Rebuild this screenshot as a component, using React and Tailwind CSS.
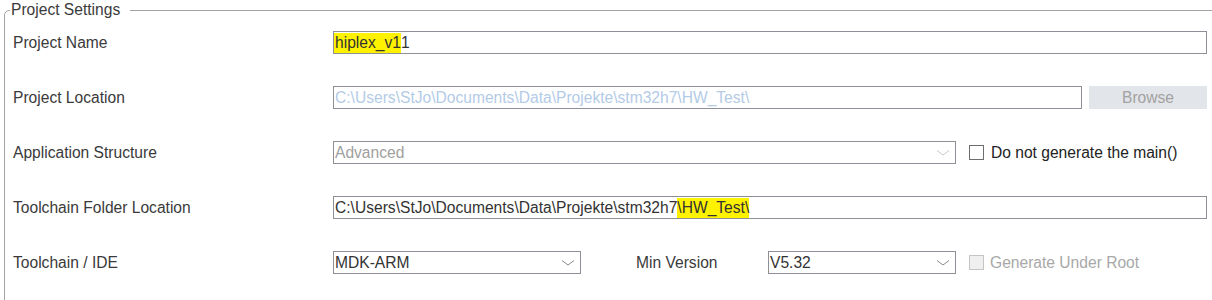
import React from 'react';

const Chevron = ({ color }) => (
  <svg width="14" height="8" viewBox="0 0 14 8" className="shrink-0">
    <polyline points="1,1.5 7,6 13,1.5" fill="none" stroke={color} strokeWidth="1" />
  </svg>
);

const Field = ({ className = '', children }) => (
  <div className={`h-[23px] border border-[#8d9197] bg-white flex items-center pl-[1px] overflow-hidden whitespace-nowrap ${className}`}>
    {children}
  </div>
);

const Select = ({ className = '', value, disabled }) => (
  <div className={`h-[23px] border border-[#8d9197] bg-white flex items-center justify-between pl-[1px] pr-[5px] shrink-0 ${className}`}>
    <span className={disabled ? 'text-[#a0a0a0]' : 'text-[#333]'}>{value}</span>
    <Chevron color={disabled ? '#c8c8c8' : '#8a8a8a'} />
  </div>
);

const Check = ({ label, disabled }) => (
  <div className="flex items-center ml-[13px] whitespace-nowrap">
    <div className={`w-[15px] h-[15px] border ${disabled ? 'border-[#c4c4c4] bg-[#efefef]' : 'border-[#6e6e6e] bg-white'}`} />
    <span className={`${disabled ? 'ml-[6px] text-[#a8a8a8]' : 'ml-[7px] text-[#222]'}`}>{label}</span>
  </div>
);

const Row = ({ label, children }) => (
  <div className="flex items-center h-[23px]">
    <div className="w-[320px] shrink-0 text-[#3a3a3a] whitespace-nowrap">{label}</div>
    {children}
  </div>
);

export default function App() {
  return (
    <div
      className="w-[1212px] h-[300px] overflow-hidden bg-white text-[15.6px] leading-[20px]"
      style={{ fontFamily: '"Liberation Sans", Arial, sans-serif' }}
    >
      <fieldset className="ml-[4px] w-[1240px] h-[320px] border border-[#a3a3a3] rounded-tl-[5px] pl-[8px]">
        <legend className="ml-[-3px] pl-[1px] pr-[10px] text-[#3a3a3a]">Project Settings</legend>
        <div className="flex flex-col gap-[32px] pt-[11px]">
          <Row label="Project Name">
            <Field className="w-[874px] text-[#333]">
              <span className="bg-[#fff200] -ml-[1px] pl-[1px]">hiplex_v1</span>1
            </Field>
          </Row>
          <Row label="Project Location">
            <Field className="w-[749px] text-[#b3cbe6]">
              C:\Users\StJo\Documents\Data\Projekte\stm32h7\HW_Test\
            </Field>
            <div className="ml-[7px] w-[118px] h-[23px] bg-[#e2e5e9] text-[#a2a2a2] flex items-center justify-center">
              Browse
            </div>
          </Row>
          <Row label="Application Structure">
            <Select className="w-[623px]" value="Advanced" disabled />
            <Check label="Do not generate the main()" />
          </Row>
          <Row label="Toolchain Folder Location">
            <Field className="w-[874px] text-[#333]">
              C:\Users\StJo\Documents\Data\Projekte\stm32h7<span className="bg-[#fff200]">\HW_Test\</span>
            </Field>
          </Row>
          <Row label="Toolchain / IDE">
            <Select className="w-[248px]" value="MDK-ARM" />
            <div className="w-[187px] pl-[55px] text-[#3a3a3a] shrink-0 whitespace-nowrap">Min Version</div>
            <Select className="w-[188px]" value="V5.32" />
            <Check label="Generate Under Root" disabled />
          </Row>
        </div>
      </fieldset>
    </div>
  );
}
